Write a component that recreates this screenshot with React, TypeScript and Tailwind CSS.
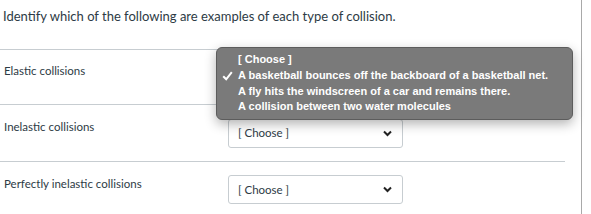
export default function App() {
  const rows = [
    { label: "Elastic collisions", h: "h-[55px]" },
    { label: "Inelastic collisions", h: "h-[57px]" },
    { label: "Perfectly inelastic collisions", h: "h-[56px]" },
  ];
  const options = [
    "A basketball bounces off the backboard of a basketball net.",
    "A fly hits the windscreen of a car and remains there.",
    "A collision between two water molecules",
  ];

  return (
    <div className="relative w-[591px] h-[214px] overflow-hidden bg-white" style={{ fontFamily: "Lato, 'Liberation Sans', sans-serif" }}>
      <div className="w-[582px] h-full border-r border-[#a9a9a9]">
        <p className="pl-[3px] pt-[8px] h-[49px] text-[13px] leading-[16px] text-[#2d3b45]">
          Identify which of the following are examples of each type of collision.
        </p>
        <div className="w-[565px]">
          {rows.map((r) => (
            <div key={r.label} className={`flex items-center ${r.h} border-t border-[#c7cdd1]`}>
              <span className="w-[228px] pl-[4px] pb-[12px] text-[11.5px] text-[#2d3b45]">{r.label}</span>
              <div className="flex items-center justify-between w-[175px] h-[29px] pl-[9px] pr-[10px] rounded-[3px] border border-[#c7cdd1] bg-white">
                <span className="text-[11.5px] text-[#2d3b45]">[ Choose ]</span>
                <svg width="9" height="7" viewBox="0 0 9 7">
                  <path d="M1 1.5 L4.5 5 L8 1.5" fill="none" stroke="#222" strokeWidth="2" />
                </svg>
              </div>
            </div>
          ))}
        </div>
      </div>

      {/* native select popup */}
      <div
        className="absolute left-[216px] top-[47px] w-[357px] h-[73px] rounded-[6px] border border-[#5c5c5c] bg-[#7a7a7a] pt-[4px] shadow-[0_4px_12px_rgba(0,0,0,0.3)] text-white font-bold text-[11px] leading-[15.8px]"
        style={{ fontFamily: "'Liberation Sans', Arial, sans-serif" }}
      >
        <div className="pl-[21px]">[ Choose ]</div>
        {options.map((o, i) => (
          <div key={o} className="relative pl-[21px]">
            {i === 0 && (
              <svg className="absolute left-[5px] top-[3px]" width="11" height="10" viewBox="0 0 11 10">
                <path d="M1.2 5.2 L4.2 8.3 L9.8 1.2" fill="none" stroke="#fff" strokeWidth="2" />
              </svg>
            )}
            {o}
          </div>
        ))}
      </div>
    </div>
  );
}
